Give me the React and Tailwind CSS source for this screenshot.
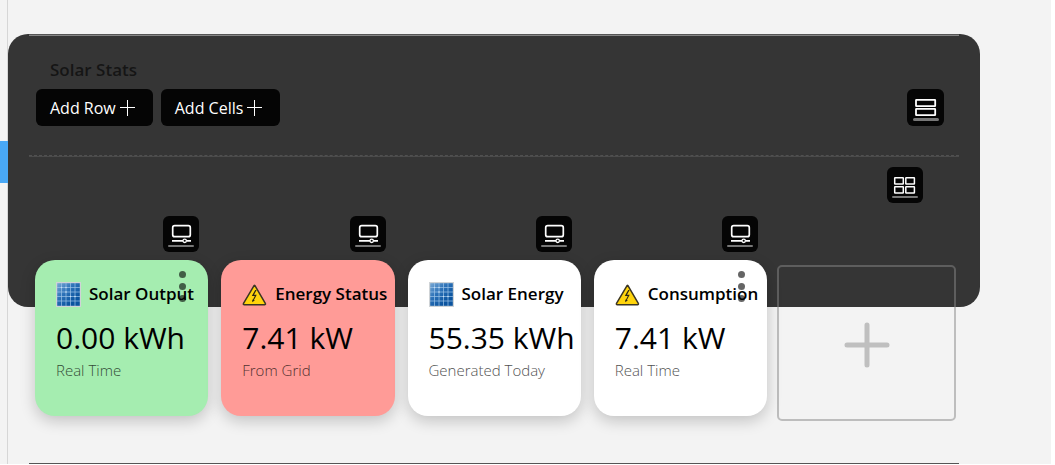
import React, { useState } from "react";

const initialCells = [
  {
    id: 1,
    title: "Solar Output",
    value: "0.00 kWh",
    note: "Real Time",
    icon: "panel",
    color: "bg-[#a5edb0]",
    menu: true,
  },
  {
    id: 2,
    title: "Energy Status",
    value: "7.41 kW",
    note: "From Grid",
    icon: "voltage",
    color: "bg-[#ff9b97]",
    menu: false,
  },
  {
    id: 3,
    title: "Solar Energy",
    value: "55.35 kWh",
    note: "Generated Today",
    icon: "panel",
    color: "bg-white",
    menu: false,
  },
  {
    id: 4,
    title: "Consumption",
    value: "7.41 kW",
    note: "Real Time",
    icon: "voltage",
    color: "bg-white",
    menu: true,
  },
];

const PlusIcon = () => (
  <svg width="16" height="16" viewBox="0 0 16 16" stroke="currentColor" aria-hidden="true">
    <path d="M7.5 0v16M0 7.5h15" />
  </svg>
);

const RowsIcon = () => (
  <svg width="37" height="37" viewBox="0 0 37 37" fill="none" aria-hidden="true">
    <g stroke="#fff" strokeWidth="1.8">
      <rect x="9" y="10.9" width="19.2" height="6.2" rx="0.4" />
      <rect x="9" y="19.9" width="19.2" height="6.2" rx="0.4" />
    </g>
    <path d="M7.5 30.5h23" stroke="#777" strokeWidth="3" strokeLinecap="round" />
  </svg>
);

const GridIcon = () => (
  <svg width="36" height="36" viewBox="0 0 36 36" fill="none" aria-hidden="true">
    <g stroke="#fff" strokeWidth="1.5">
      <rect x="7.7" y="10.7" width="8.6" height="6.4" rx="0.4" />
      <rect x="18.8" y="10.7" width="8.6" height="6.4" rx="0.4" />
      <rect x="7.7" y="19.7" width="8.6" height="6.4" rx="0.4" />
      <rect x="18.8" y="19.7" width="8.6" height="6.4" rx="0.4" />
    </g>
    <path d="M6 30h24" stroke="#777" strokeWidth="2" strokeLinecap="round" />
  </svg>
);

const DeviceIcon = () => (
  <svg width="36" height="36" viewBox="0 0 36 36" fill="none" aria-hidden="true">
    <g stroke="#fff" strokeWidth="1.7">
      <rect x="9.7" y="9.7" width="17.6" height="11" rx="2" />
      <path d="M9 24.8h11M23.4 24.8H28" />
      <circle cx="21.7" cy="24.8" r="1.7" strokeWidth="1.3" />
    </g>
    <path d="M6 30h24" stroke="#777" strokeWidth="2" strokeLinecap="round" />
  </svg>
);

const SolarPanelIcon = () => (
  <svg className="shrink-0" width="25" height="25" viewBox="0 0 25 25" aria-hidden="true">
    <defs>
      <linearGradient id="cellBlue" x1="0" y1="0" x2="0.7" y2="0.8">
        <stop offset="0" stopColor="#78a8d4" />
        <stop offset="0.5" stopColor="#2d72b8" />
        <stop offset="1" stopColor="#0b549f" />
      </linearGradient>
    </defs>
    <rect width="25" height="25" fill="#cfd3d6" />
    <rect x="1.2" y="1.2" width="22.6" height="22.6" fill="url(#cellBlue)" />
    <g stroke="#9ec4e8" strokeWidth="0.7">
      <path d="M5.5 1v23M10 1v23M14.5 1v23M19 1v23" />
      <path d="M1 5.5h23M1 10h23M1 14.5h23M1 19h23" />
    </g>
    <g fill="#c5def4">
      <circle cx="5.5" cy="5.5" r="0.8" />
      <circle cx="10" cy="5.5" r="0.8" />
      <circle cx="10" cy="10" r="0.8" />
      <circle cx="14.5" cy="14.5" r="0.8" />
      <circle cx="19" cy="14.5" r="0.8" />
    </g>
  </svg>
);

const VoltageIcon = () => (
  <svg className="shrink-0" width="25" height="25" viewBox="0 0 25 25" aria-hidden="true">
    <path
      d="M12.2 3.4 1.5 21.4a.9.9 0 0 0 .8 1.4h20.2a.9.9 0 0 0 .8-1.4L12.8 3.4a.4.4 0 0 0-.6 0z"
      fill="#ffd40c"
      stroke="#3b3522"
      strokeWidth="1.5"
      strokeLinejoin="round"
    />
    <path d="m13.2 8-3.4 6 3 .1-2 4-.6-.8.1 3 2.6-2-1-.2 2.8-5.3-2.7-.1L14.6 8z" fill="#2b2614" />
  </svg>
);

const IconButton = ({ label, className = "", children }) => (
  <button
    type="button"
    aria-label={label}
    className={`rounded-md bg-[#050505] cursor-pointer ${className}`}
  >
    {children}
  </button>
);

const StatCell = ({ cell }) => (
  <div className="flex min-w-0 flex-col gap-2">
    <IconButton label={`${cell.title} device`} className="mr-[9px] self-end">
      <DeviceIcon />
    </IconButton>
    <div
      className={`relative h-39 rounded-[20px] px-[21px] pt-5 shadow-[0_5px_15px_rgba(0,0,0,0.2)] whitespace-nowrap ${cell.color}`}
    >
      {cell.menu && (
        <button
          type="button"
          aria-label={`${cell.title} menu`}
          className="absolute top-[11px] right-[22px] flex cursor-pointer flex-col gap-[5px] opacity-60"
        >
          <span className="size-[7px] rounded-full bg-black"></span>
          <span className="size-[7px] rounded-full bg-black"></span>
          <span className="size-[7px] rounded-full bg-black"></span>
        </button>
      )}
      <div className="relative flex h-7 items-center gap-2">
        {cell.icon === "panel" ? <SolarPanelIcon /> : <VoltageIcon />}
        <h3 className="text-[17px] leading-7 font-semibold">{cell.title}</h3>
      </div>
      <p className="mt-[9px] text-[30px] leading-[42px]">{cell.value}</p>
      <p className="text-[15px] leading-[22px] font-light opacity-70">{cell.note}</p>
    </div>
  </div>
);

const App = () => {
  const [cells] = useState(initialCells);

  return (
    <div className="bg-white pr-1 pb-px font-['Open_Sans','Noto_Sans',sans-serif] text-black">
      <div className="flex overflow-hidden bg-[#f3f3f3]">
        <aside className="w-2 shrink-0 border-r border-[#d6d6d6] pt-[141px]">
          <div className="-mr-px h-[42px] bg-[#49a8f5]"></div>
        </aside>

        <main className="min-w-0 flex-1 pt-[34px] pr-[71px]">
          <section className="flow-root rounded-[20px] bg-[#353535] px-[21px]">
            <div className="border-t border-b border-t-[#555] border-b-[#858585]"></div>

            <h2 className="pt-[21px] pl-[21px] text-[17px] leading-[26px] font-semibold text-[#151515]">
              Solar Stats
            </h2>
            <div className="mt-[6px] flex items-center gap-2 pr-[15px] pl-[7px] text-white">
              <button
                type="button"
                className="flex h-[37px] cursor-pointer items-center gap-1 rounded-md bg-[#050505] pr-[17px] pl-[14px] text-base"
              >
                Add Row <PlusIcon />
              </button>
              <button
                type="button"
                className="flex h-[37px] cursor-pointer items-center gap-1 rounded-md bg-[#050505] pr-[17px] pl-[14px] text-base"
              >
                Add Cells <PlusIcon />
              </button>
              <IconButton label="Row layout" className="ml-auto">
                <RowsIcon />
              </IconButton>
            </div>

            <div className="mt-[29px] border-t border-dashed border-[#505050]"></div>
            <div className="border-t border-[#4b4b4b]"></div>

            <div className="mt-[10px] flex justify-end pr-9">
              <IconButton label="Grid layout">
                <GridIcon />
              </IconButton>
            </div>

            {/* cells hang below the dark panel */}
            <div className="mt-[13px] -mb-[114px] flex items-end gap-[10px] pr-[3px] pl-[6px]">
              <div className="mb-[5px] grid flex-1 grid-cols-4 gap-[13px]">
                {cells.map((cell) => (
                  <StatCell key={cell.id} cell={cell} />
                ))}
              </div>
              <button
                type="button"
                aria-label="Add cell"
                className="flex h-39 w-[179px] shrink-0 cursor-pointer items-center justify-center rounded-[5px] border-2 border-[#888]/50 pt-1 text-[#bfbfbf]"
              >
                <svg width="46" height="46" viewBox="0 0 46 46" stroke="currentColor" strokeWidth="5" strokeLinecap="round" aria-hidden="true">
                  <path d="M23 3v40M3 23h40" />
                </svg>
              </button>
            </div>
          </section>

          <div className="mx-[21px] mt-[156px] border-t border-[#555]"></div>
        </main>
      </div>
    </div>
  );
};

export default App;
